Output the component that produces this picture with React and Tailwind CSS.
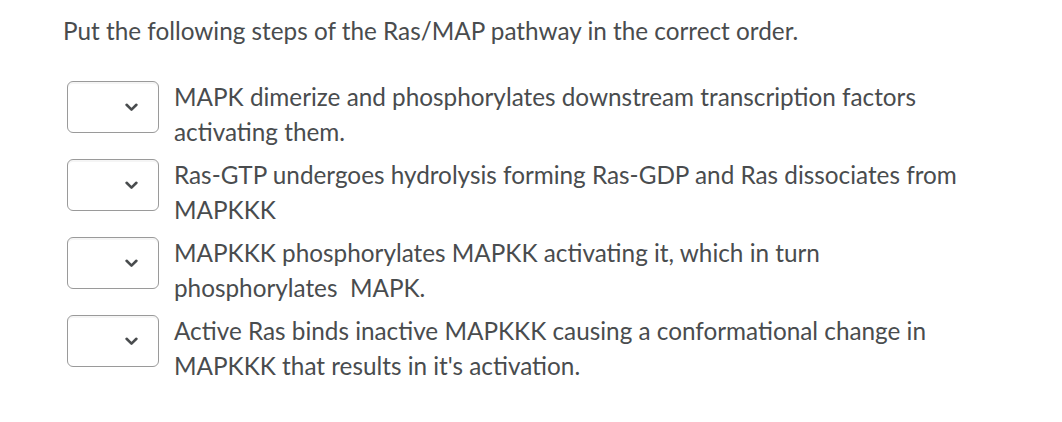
import React from "react";

const steps = [
  "MAPK dimerize and phosphorylates downstream transcription factors activating them.",
  "Ras-GTP undergoes hydrolysis forming Ras-GDP and Ras dissociates from MAPKKK",
  "MAPKKK phosphorylates MAPKK activating it, which in turn phosphorylates\u00a0 MAPK.",
  "Active Ras binds inactive MAPKKK causing a conformational change in MAPKKK that results in it's activation.",
];

function Chevron() {
  return (
    <svg width="13" height="9" viewBox="0 0 13 9" fill="none">
      <path
        d="M1.6 1.8 L6.5 6.6 L11.4 1.8"
        stroke="#494c4e"
        strokeWidth="2.6"
        strokeLinecap="round"
        strokeLinejoin="round"
      />
    </svg>
  );
}

function OrderSelect() {
  return (
    <div className="flex h-[52px] w-[92px] shrink-0 items-center justify-end rounded-[6px] border border-[#9a9a9a] bg-white pr-[20px] shadow-[inset_0_2px_0_rgba(0,0,0,0.04)]">
      <Chevron />
    </div>
  );
}

export default function App() {
  return (
    <div
      className="min-h-[422px] w-[1062px] bg-white pl-[63px] pt-[14px] text-[#494c4e]"
      style={{ fontFamily: "Lato, 'Liberation Sans', sans-serif" }}
    >
      <p className="text-[24.3px] leading-[34px]">
        Put the following steps of the Ras/MAP pathway in the correct order.
      </p>

      <div className="mt-[33px] flex flex-col gap-[10px] pl-[4px]">
        {steps.map((s, i) => (
          <div key={i} className="flex items-start gap-[15px]">
            <OrderSelect />
            <div className="-mt-[2px] w-[800px] text-[24.3px] leading-[35px]">{s}</div>
          </div>
        ))}
      </div>
    </div>
  );
}
